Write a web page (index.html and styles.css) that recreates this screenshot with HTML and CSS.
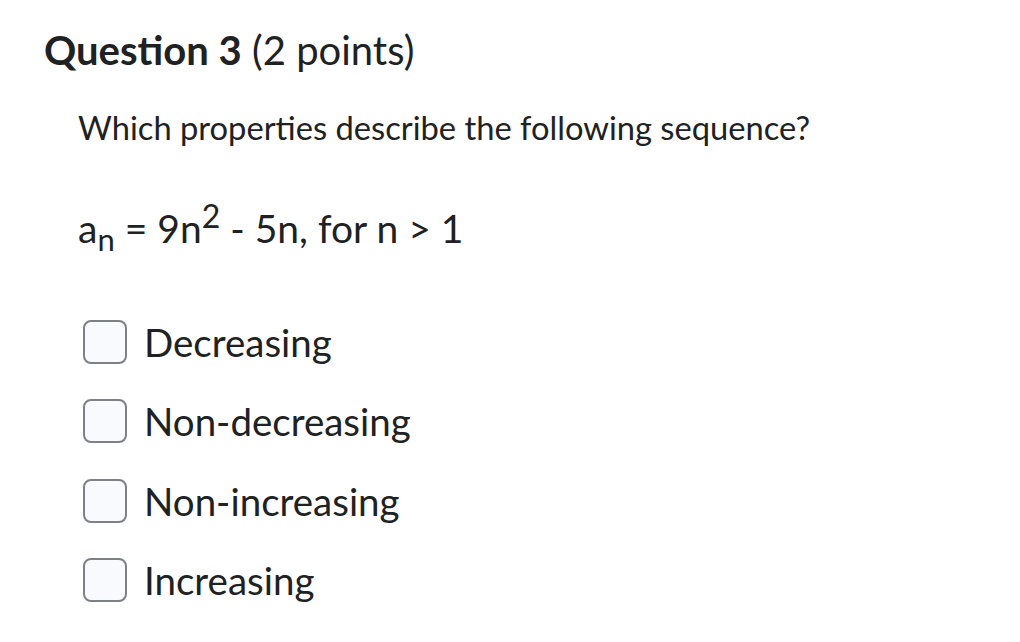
FILE: index.html
```html
<!DOCTYPE html>
<html>
<head>
<meta charset="utf-8">
<link rel="stylesheet" href="styles.css">
</head>
<body>
<div class="question">
  <h2 class="q-title"><strong>Question 3</strong> (2 points)</h2>
  <div class="q-body">
    <p class="prompt">Which properties describe the following sequence?</p>
    <p class="formula">a<sub>n</sub> = 9n<sup>2</sup> - 5n, for n &gt; 1</p>
    <ul class="options">
      <li class="option"><span class="box"></span><span class="label">Decreasing</span></li>
      <li class="option"><span class="box"></span><span class="label">Non-decreasing</span></li>
      <li class="option"><span class="box"></span><span class="label">Non-increasing</span></li>
      <li class="option"><span class="box"></span><span class="label">Increasing</span></li>
    </ul>
  </div>
</div>
</body>
</html>
```

FILE: styles.css
```css
html, body {
  margin: 0;
  padding: 0;
  background: #ffffff;
}
body {
  font-family: Lato, "Open Sans", sans-serif;
  color: #202122;
}
.question {
  padding: 26px 0 0 44px;
}
.q-title {
  margin: 0;
  font-size: 40px;
  font-weight: 400;
  line-height: 48px;
}
.q-title strong {
  font-weight: 700;
}
.q-body {
  padding-left: 34px;
}
.prompt {
  margin: 34px 0 0 0;
  font-size: 32.7px;
  line-height: 40px;
}
.formula {
  margin: 60px 0 0 0;
  font-size: 39px;
  line-height: 40px;
}
.formula sub {
  font-size: 31px;
  vertical-align: -8px;
  line-height: 0;
}
.formula sup {
  font-size: 32px;
  vertical-align: 15px;
  line-height: 0;
}
.options {
  list-style: none;
  margin: 54px 0 0 0;
  padding: 0;
}
.option {
  display: flex;
  align-items: center;
  height: 79.5px;
}
.box {
  width: 40px;
  height: 40px;
  margin-left: 5px;
  border: 2px solid #7e8184;
  border-radius: 8px;
  background: #f9fafe;
  flex-shrink: 0;
}
.label {
  margin-left: 17px;
  font-size: 38.5px;
  line-height: 40px;
}
```
